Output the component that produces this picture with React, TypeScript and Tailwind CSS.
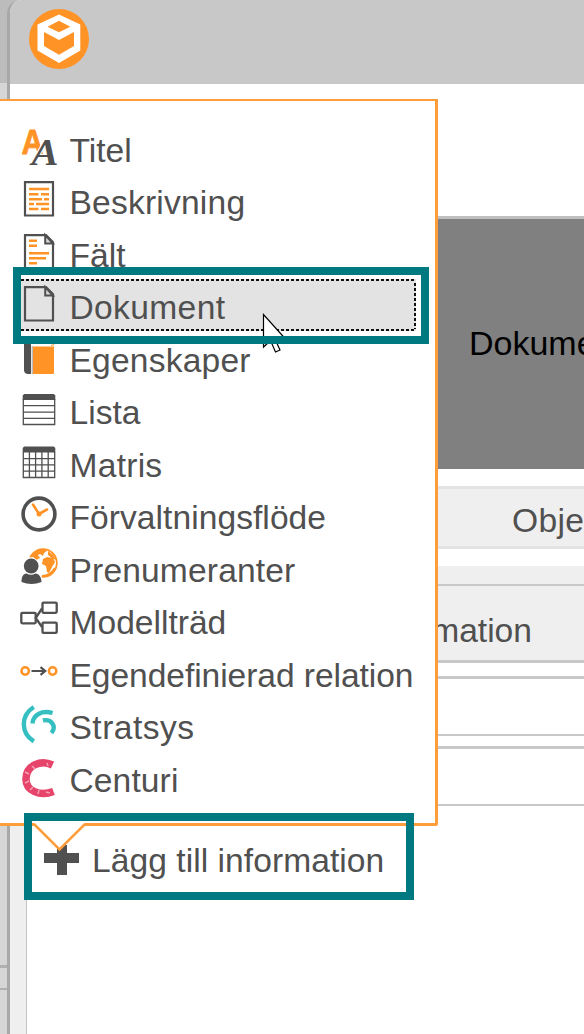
import type { ReactNode } from "react";

const DARK = "#505050";
const ORANGE = "#ff9326";
const TEAL = "#35bfc0";

interface MenuItem {
  label: string;
  icon: ReactNode;
  active?: boolean;
  tracking?: string;
}

function PageOutline() {
  return (
    <g fill="none" stroke={DARK} strokeWidth="2.2">
      <path d="M5 8.200h21l7 7v26.300H5z" />
      <path d="M25.200 8v8.600H33z" fill="#d8d8d8" strokeWidth="2" />
    </g>
  );
}

// every icon is drawn in a 40x52 box, as tall as the menu row
const items: MenuItem[] = [
  {
    label: "Titel",
    icon: (
      <>
        <text x="1.500" y="32" fontSize="35" fontWeight="700" fill={ORANGE} stroke={ORANGE} strokeWidth="0.800" fontFamily="Liberation Sans, sans-serif" textLength="22" lengthAdjust="spacingAndGlyphs">A</text>
        <text x="11.500" y="42.500" fontSize="37" fontWeight="700" fontStyle="italic" fill={DARK} stroke="#fff" strokeWidth="2" paintOrder="stroke" fontFamily="Liberation Serif, serif" textLength="27" lengthAdjust="spacingAndGlyphs">A</text>
      </>
    ),
  },
  {
    label: "Beskrivning",
    tracking: "tracking-[0.2px]",
    icon: (
      <>
        <path d="M5 8.200h28v33.300H5z" fill="none" stroke={DARK} strokeWidth="2.200" />
        <path d="M9 15h20M9 20.200h9.500M21 20.200h8M9 25.200h13M24 25.200H29M9 30h5M16 30h13M9 35h9.500M21 35h8" stroke={ORANGE} strokeWidth="2.600" />
      </>
    ),
  },
  {
    label: "Fält",
    icon: (
      <>
        <PageOutline />
        <path d="M9 13.800h8M9 18.800h8M9 26.200h20M9 31.200h17M9 36.200h8" stroke={ORANGE} strokeWidth="2.600" />
      </>
    ),
  },
  { label: "Dokument", icon: <PageOutline />, active: true, tracking: "tracking-[0.35px]" },
  {
    label: "Egenskaper",
    tracking: "tracking-[0.2px]",
    icon: (
      <>
        <path d="M6 8h5v34H7.500Q4 41.500 4 38V11z" fill={DARK} />
        <path d="M12.200 14v28" stroke="#a0a0a0" strokeWidth="1" />
        <path d="M31 13.500l3-1" stroke={ORANGE} />
        <path d="M13 14.500h21V41q0 1-1 1H13z" fill={ORANGE} />
      </>
    ),
  },
  {
    label: "Lista",
    icon: (
      <>
        <path d="M3.300 15v25.500h31.400V15M3 21.700h32M3 28.200h32M3 34.400h32" fill="none" stroke={DARK} strokeWidth="1.300" />
        <path d="M2.700 16v-4.500l1.500-1.500h29.600l1.500 1.500V16z" fill={DARK} />
      </>
    ),
  },
  {
    label: "Matris",
    tracking: "tracking-[0.25px]",
    icon: (
      <>
        <path d="M3.300 15v25.500h31.400V15M3 21.700h32M3 27.900h32M3 34.100h32M9.400 15v25.500M15.600 15v25.500M21.900 15v25.500M28.200 15v25.500" fill="none" stroke={DARK} strokeWidth="1.300" />
        <path d="M2.700 15.500V11l1.500-1.500h29.600l1.500 1.500v4.500z" fill={DARK} />
      </>
    ),
  },
  {
    label: "Förvaltningsflöde",
    tracking: "tracking-[0.05px]",
    icon: (
      <>
        <circle cx="19" cy="25" r="15.900" fill="none" stroke={DARK} strokeWidth="3.600" />
        <path d="M13 15.500l6 9.500 8-4.500" fill="none" stroke={ORANGE} strokeWidth="2.600" strokeLinecap="round" />
        <circle cx="19" cy="25" r="2.500" fill={ORANGE} />
      </>
    ),
  },
  {
    label: "Prenumeranter",
    tracking: "tracking-[0.15px]",
    icon: (
      <>
        <circle cx="23" cy="21" r="13.800" fill="#fff" stroke={ORANGE} strokeWidth="1.800" />
        <path d="M10 16c3-6 8-9.500 14-9l3 2-3 2-1 3-3-2-2 1 2 3-4 2-2-2-3 1z" fill={ORANGE} />
        <path d="M23 17l4-2 6 1 2 4-3 5-3 6-2-1-1-6-4-2zM28 9l5 4 3 5-4-2-4-3z" fill={ORANGE} />
        <path d="M0 44V30l5-14 8-1 6 5 2 10 2 15z" fill="#fff" />
        <path d="M22 34q8 0 13-8" fill="none" stroke={ORANGE} strokeWidth="2" />
        <circle cx="11.200" cy="24" r="7.400" fill={DARK} />
        <path d="M1.500 40c0-5 1.500-8 5-8.500q4.500 2.500 9 0c3.500.5 6 3.500 6 8.500q-10 4-20 0z" fill={DARK} />
      </>
    ),
  },
  {
    label: "Modellträd",
    icon: (
      <g fill="none" stroke={DARK} strokeWidth="2.300">
        <rect x="1.300" y="18.900" width="14.400" height="10.400" rx="1" />
        <rect x="22.500" y="8.600" width="14.200" height="10.200" rx="1" />
        <rect x="22.500" y="28.700" width="14.200" height="10.200" rx="1" />
        <path d="M22 14.500L15.700 24l6.300 9" />
      </g>
    ),
  },
  {
    label: "Egendefinierad relation",
    tracking: "tracking-[-0.06px]",
    icon: (
      <g fill="none" strokeWidth="2.500">
        <circle cx="5.200" cy="24" r="3.700" stroke={ORANGE} />
        <circle cx="32.600" cy="24" r="3.700" stroke={ORANGE} />
        <path d="M11.500 24H25M20.500 20.200l4.700 3.800-4.700 3.800" stroke={DARK} strokeWidth="2.200" />
      </g>
    ),
  },
  {
    label: "Stratsys",
    tracking: "tracking-[0.45px]",
    icon: (
      <g fill="none" stroke={TEAL} strokeWidth="4.400">
        <path d="M13.800 8C.5 16.500.5 34 13.800 42.300" />
        <path d="M12.300 24.500C13.500 15.500 22 11 32.600 14" />
        <path d="M23 21.500C31 19.500 37 27 31.500 34" />
      </g>
    ),
  },
  {
    label: "Centuri",
    tracking: "tracking-[0.1px]",
    icon: (
      <>
        <path d="M32.500 13C21 7.500 6.500 13 6 26.500 5.500 39 20 44.500 33.500 39.500" fill="none" stroke="#e6446a" strokeWidth="7.500" />
        <path d="M5 20l4 2M5 31l4-2M10 38l3-3M18 42l1-4M26 40l4 1M12 14l3 3M27 11l1 3" stroke="#f3a0b3" strokeWidth="1.500" />
      </>
    ),
  },
];

function MenuRow({ label, icon, active, tracking = "" }: MenuItem) {
  return (
    <li className="relative flex h-[52.5px] items-center pl-[20px]">
      {active && (
        <svg className="absolute top-0 left-[21px] h-[52px] w-[395px]" viewBox="0 0 395 52">
          <rect width="395" height="52" fill="#e3e3e3" />
          <path d="M0 1h395M0 51h395M394 4v46" stroke="#111" strokeWidth="2" strokeDasharray="3 2" />
        </svg>
      )}
      <svg className="relative h-[52px] w-10 shrink-0 self-start" viewBox="0 0 40 52">{icon}</svg>
      <span className={`relative ml-[9.5px] pt-[6px] whitespace-nowrap ${tracking}`}>{label}</span>
    </li>
  );
}

function Logo() {
  return (
    <svg className="size-[60px]" viewBox="0 0 60 60">
      <circle cx="30" cy="30" r="30" fill={ORANGE} />
      <path fill="#fff" fillRule="evenodd" d="M30 5.500L51.300 15.500V41.500L30 54 8.500 41.500V15.500zM18.500 17.700L30 23.300l11.300-5.600L30 11.800zM15 23v14l15 8.800L45 37V23L30 31z" />
    </svg>
  );
}

export default function App() {
  return (
    <div className="relative flex h-[1034px] w-[584px] overflow-hidden bg-[#bcbcbc] font-['Liberation_Sans',Arial,sans-serif] text-[33.6px] leading-[40px] text-[#505050]">
      {/* edge of the page behind the dialog */}
      <div className="flex w-[7px] shrink-0 flex-col">
        <div className="h-[83px] bg-[#bcbcbc]" />
        <div className="h-[882px] bg-[#d6d6d6]" />
        <div className="h-[3px] bg-[#b0b0b0]" />
        <div className="h-[20px] bg-[#d6d6d6]" />
        <div className="h-[2px] bg-[#b0b0b0]" />
        <div className="flex-1 bg-[#d6d6d6]" />
      </div>

      <div className="flex flex-1 flex-col overflow-hidden rounded-tl-[14px] border-l-[3px] border-[#a8a8a8] bg-white">
        <header className="h-[84px] shrink-0 bg-[#c8c8c8] pt-[9px] pl-[19px]">
          <Logo />
        </header>
        <div className="flex flex-1">
          <aside className="mt-[132px] w-[17px] shrink-0 border-r border-[#c4c4c4] bg-[#efefef]" />
          <main className="flex min-w-0 flex-1 flex-col overflow-hidden whitespace-nowrap">
            <div className="mt-[132px] h-[253px] shrink-0 border-t-[3px] border-[#bfbfbf] bg-[#808080] pt-[104px] pl-[442px] text-[34px] text-black">
              Dokument
            </div>
            <div className="mt-[17px] h-[63px] shrink-0 border-y-[3px] border-[#e3e3e3] bg-[#efefef] pt-[12px] pl-[485px] tracking-[0.3px]">Objekt</div>
            <div className="mt-[17px] h-[18px] shrink-0 bg-[#efefef]" />
            <div className="h-[79px] shrink-0 border-t-2 border-b-[3px] border-[#c8c8c8] bg-[#efefef] pt-[25px] pl-[337px]">Information</div>
            <div className="mt-[13px] h-[60px] shrink-0 border-t-[3px] border-b-2 border-[#c8c8c8]" />
            <div className="mt-[10px] h-[60px] shrink-0 border-t-[3px] border-b-2 border-[#c8c8c8]" />
            <button className="mt-[35px] flex items-center pl-[17px]">
              <svg className="mb-[3px] h-[30px] w-[35px]" viewBox="0 0 35 30">
                <path d="M13 0h10v8h12v10H23v12H13V18H0V8h13z" fill={DARK} />
              </svg>
              <span className="ml-[13px] tracking-[0.05px]">Lägg till information</span>
            </button>
          </main>
        </div>
      </div>

      <div className="absolute top-[99px] left-0 h-[727px] w-[438px] rounded-br-[3px] border-t-2 border-r-[3px] border-b-[3px] border-[#ff9d3b] bg-white pt-[20.5px]">
        <ul>
          {items.map((item) => (
            <MenuRow key={item.label} {...item} />
          ))}
        </ul>
      </div>
      <svg className="absolute top-[822px] left-[32px] h-[32px] w-[56px]" viewBox="0 0 56 32">
        <path d="M2 0v2.500L27.500 28 52.500 2.500V0z" fill="#fff" />
        <path d="M0 2.500h2.500L27.500 27.500l25-25H56" fill="none" stroke="#ff9d3b" strokeWidth="2.600" />
      </svg>

      <svg className="absolute top-[313px] left-[262px] h-[42px] w-[28px]" viewBox="0 0 28 42">
        <path d="M1.500 1.500v32.500l7-6.500 5 11.500 4.500-2-5-11h10.500z" fill="#fff" stroke="#000" strokeWidth="1.200" />
      </svg>

      <div className="absolute top-[267px] left-[13px] h-[77px] w-[416px] border-8 border-[#007a80]" />
      <div className="absolute top-[813px] left-[24px] h-[87px] w-[390px] border-8 border-[#007a80]" />
    </div>
  );
}
